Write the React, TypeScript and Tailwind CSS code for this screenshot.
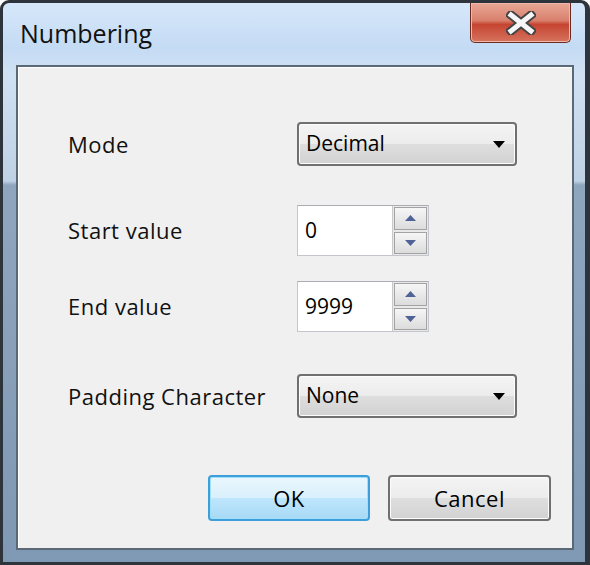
const font = { fontFamily: '"Open Sans", "Noto Sans", sans-serif' }

const Caret = () => (
  <svg width="12" height="7" viewBox="0 0 12 7">
    <path d="M0 0h12L6 7z" fill="#000" />
  </svg>
)

const SpinArrow = ({ up }: { up?: boolean }) => (
  <svg width="11" height="6" viewBox="0 0 11 6">
    <path d={up ? 'M0 6h11L5.5 0z' : 'M0 0h11L5.5 6z'} fill="#4f6396" />
  </svg>
)

const Dropdown = ({ value }: { value: string }) => (
  <div className="w-[220px] h-[44px] flex items-center justify-between pl-[7px] pr-[10px] border-2 border-[#707070] rounded-[4px] bg-[linear-gradient(180deg,#f4f4f4_0%,#ececec_50%,#dedede_51%,#d2d2d2_100%)] shadow-[inset_0_0_0_1px_#fcfcfc]">
    <span className="text-[21px] text-black">{value}</span>
    <Caret />
  </div>
)

const SpinBox = ({ value }: { value: string }) => (
  <div className="w-[132px] h-[51px] flex border border-[#c3c6cc] border-t-[#abadb3] bg-white">
    <div className="flex-1 flex items-center pl-[7px] text-[21px] text-black">{value}</div>
    <div className="w-[36px] flex flex-col gap-[2px] p-[1px] bg-[#e9e9e9] border-l border-[#c9c9c9]">
      <div className="flex-1 flex items-center justify-center border border-[#a3a3a3] bg-[linear-gradient(180deg,#f6f6f6,#dcdcdc)]">
        <SpinArrow up />
      </div>
      <div className="flex-1 flex items-center justify-center border border-[#a3a3a3] bg-[linear-gradient(180deg,#f6f6f6,#dcdcdc)]">
        <SpinArrow />
      </div>
    </div>
  </div>
)

const Row = ({ label, children, className }: { label: string; children: React.ReactNode; className?: string }) => (
  <div className={`flex items-center ${className ?? ''}`}>
    <span className="w-[229px] text-[22px] tracking-[0.5px] text-[#111]">{label}</span>
    {children}
  </div>
)

export default function App() {
  return (
    <div className="w-[590px] h-[565px] bg-white" style={font}>
      <div className="w-full h-full flex flex-col rounded-t-[9px] border-[3px] border-r-[5px] border-[#2e343b] pl-[13px] pr-[11px] pb-[12px] bg-[linear-gradient(180deg,#d6e7fa_0px,#c4dbf4_45px,#d0e1f3_70px,#bfd1e4_178px,#8fa6bf_182px,#7f98b3_565px)]">
        <div className="h-[62px] flex justify-between">
          <span className="self-center pl-[4px] text-[25px] text-[#111]">Numbering</span>
          <div className="w-[101px] h-[40px] mr-[3px] flex items-center justify-center rounded-b-[5px] border border-t-0 border-[#6a2b22] bg-[linear-gradient(180deg,#e9a897_0%,#d9806c_45%,#c54431_55%,#d6735d_100%)] shadow-[inset_0_0_0_1px_#f0b8aa]">
            <svg width="30" height="24" viewBox="0 0 30 24">
              <path d="M5 4l20 16M25 4L5 20" stroke="#454545" strokeWidth="9" strokeLinecap="square" />
              <path d="M5 4l20 16M25 4L5 20" stroke="#f6f6f6" strokeWidth="5" strokeLinecap="square" />
            </svg>
          </div>
        </div>
        <div className="flex-1 flex flex-col border-2 border-[#5b6876] bg-[#f0f0f0] shadow-[inset_1px_1px_0_#ffffff] pl-[50px]">
          <Row label="Mode" className="mt-[55px]">
            <Dropdown value="Decimal" />
          </Row>
          <Row label="Start value" className="mt-[39px]">
            <SpinBox value="0" />
          </Row>
          <Row label="End value" className="mt-[25px]">
            <SpinBox value="9999" />
          </Row>
          <Row label="Padding Character" className="mt-[42px]">
            <Dropdown value="None" />
          </Row>
          <div className="mt-[57px] flex justify-end gap-[18px] pr-[21px]">
            <button className="w-[162px] h-[46px] rounded-[4px] border-2 border-[#3d9ed9] bg-[linear-gradient(180deg,#eaf6fd_0%,#d9f0fc_50%,#bee6fd_51%,#a7d9f5_100%)] shadow-[inset_0_0_0_1px_#9fe0fb] text-[22px] tracking-[0.5px] text-black">
              OK
            </button>
            <button className="w-[163px] h-[46px] rounded-[4px] border-2 border-[#707070] bg-[linear-gradient(180deg,#f4f4f4_0%,#ececec_50%,#dedede_51%,#d2d2d2_100%)] shadow-[inset_0_0_0_1px_#fcfcfc] text-[22px] tracking-[0.5px] text-black">
              Cancel
            </button>
          </div>
        </div>
      </div>
    </div>
  )
}
